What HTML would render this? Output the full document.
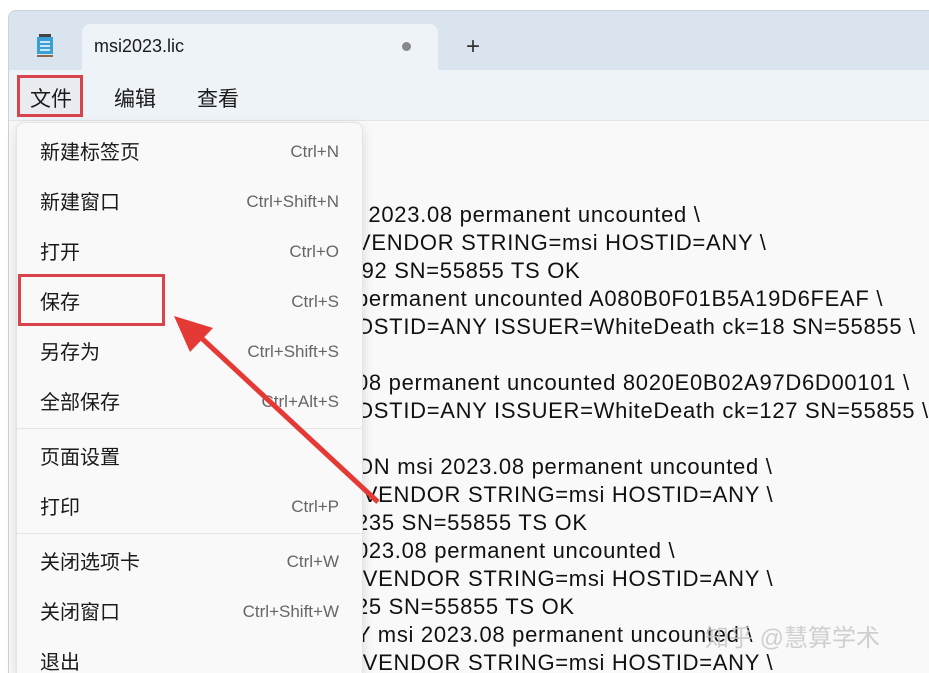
<!DOCTYPE html>
<html style="width:929px;height:673px;overflow:hidden"><head><meta charset="utf-8"><style>
*{margin:0;padding:0;box-sizing:border-box}
body{width:929px;height:673px;overflow:hidden;background:#fff;position:relative;font-family:"Liberation Sans","Noto Sans CJK SC",sans-serif}
.win{position:absolute;left:8px;top:10px;width:921px;height:663px;background:#d9e4ee;border-radius:8px 0 0 0;border:1px solid #c9d3dc;border-right:none;border-bottom:none}
.tab{position:absolute;left:82px;top:24px;width:356px;height:48px;background:#eef3f8;border-radius:8px 8px 0 0}
.bar{position:absolute;left:9px;top:70px;width:920px;height:50px;background:#eef3f8}
.edit{position:absolute;left:9px;top:120px;width:920px;height:553px;background:#f9f9f9;border-top:1px solid #e2e6ea}
.t{position:absolute;white-space:pre;color:#1a1a1a}
.code{position:absolute;left:356px;font-size:22px;letter-spacing:0.7px;color:#111;white-space:pre;line-height:28px}
.menu{position:absolute;left:16px;top:122px;width:347px;height:560px;background:#f9f9f9;border:1px solid #e3e3e3;border-radius:8px;box-shadow:0 4px 12px rgba(0,0,0,.12)}
.mi{position:absolute;left:23px;font-size:20px;color:#1a1a1a}
.sc{position:absolute;right:23px;font-size:17px;color:#666}
.sep{position:absolute;left:0;right:0;height:1px;background:#e5e5e5}
</style></head><body>
<div class="win"></div>
<div class="tab"></div>
<div class="bar"></div>
<div class="edit"></div>
<svg style="position:absolute;left:36px;top:34px" width="18" height="24"><rect x="1" y="3" width="16" height="17" fill="#3a9fd6"/><rect x="3" y="0" width="12" height="3" fill="#444"/><path d="M4 8h10M4 12h10M4 16h10" stroke="#fff" stroke-width="1.5"/><rect x="1" y="21" width="16" height="2" fill="#8a6a4a"/></svg>
<div class="t" style="left:94px;top:36px;font-size:18px">msi2023.lic</div>
<div style="position:absolute;left:402px;top:42px;width:9px;height:9px;border-radius:50%;background:#888"></div>
<div class="t" style="left:466px;top:33px;font-size:24px;color:#333">+</div>
<div style="position:absolute;left:17px;top:75px;width:66px;height:42px;border:3px solid #d9434b;background:#e9edf1"></div>
<div class="t" style="left:30px;top:83px;font-size:21px">文件</div>
<div class="t" style="left:114px;top:83px;font-size:21px">编辑</div>
<div class="t" style="left:197px;top:83px;font-size:21px">查看</div>
<div class="code" style="top:201px">i 2023.08 permanent uncounted \
VENDOR STRING=msi HOSTID=ANY \
l92 SN=55855 TS OK
permanent uncounted A080B0F01B5A19D6FEAF \
OSTID=ANY ISSUER=WhiteDeath ck=18 SN=55855 \

08 permanent uncounted 8020E0B02A97D6D00101 \
OSTID=ANY ISSUER=WhiteDeath ck=127 SN=55855 \

ON msi 2023.08 permanent uncounted \
 VENDOR STRING=msi HOSTID=ANY \
235 SN=55855 TS OK
023.08 permanent uncounted \
 VENDOR STRING=msi HOSTID=ANY \
25 SN=55855 TS OK
Y msi 2023.08 permanent uncounted \
 VENDOR STRING=msi HOSTID=ANY \</div>
<div class="t" style="left:705px;top:618px;font-size:24px;color:rgba(200,200,200,.85)">知乎 @慧算学术</div>
<div class="menu">
<div class="mi" style="top:13px">新建标签页</div><div class="sc" style="top:19px">Ctrl+N</div>
<div class="mi" style="top:63px">新建窗口</div><div class="sc" style="top:69px">Ctrl+Shift+N</div>
<div class="mi" style="top:113px">打开</div><div class="sc" style="top:119px">Ctrl+O</div>
<div class="mi" style="top:163px">保存</div><div class="sc" style="top:169px">Ctrl+S</div>
<div class="mi" style="top:213px">另存为</div><div class="sc" style="top:219px">Ctrl+Shift+S</div>
<div class="mi" style="top:263px">全部保存</div><div class="sc" style="top:269px">Ctrl+Alt+S</div>
<div class="sep" style="top:305px"></div>
<div class="mi" style="top:318px">页面设置</div>
<div class="mi" style="top:368px">打印</div><div class="sc" style="top:374px">Ctrl+P</div>
<div class="sep" style="top:410px"></div>
<div class="mi" style="top:423px">关闭选项卡</div><div class="sc" style="top:429px">Ctrl+W</div>
<div class="mi" style="top:473px">关闭窗口</div><div class="sc" style="top:479px">Ctrl+Shift+W</div>
<div class="mi" style="top:523px">退出</div>
</div>
<div style="position:absolute;left:18px;top:274px;width:147px;height:52px;border:3px solid #d9434b"></div>
<svg style="position:absolute;left:0;top:0" width="929" height="673"><line x1="378" y1="502" x2="195" y2="332" stroke="#e53935" stroke-width="5"/><polygon points="174,316 213,328 190,352" fill="#e53935"/></svg>
</body></html>
